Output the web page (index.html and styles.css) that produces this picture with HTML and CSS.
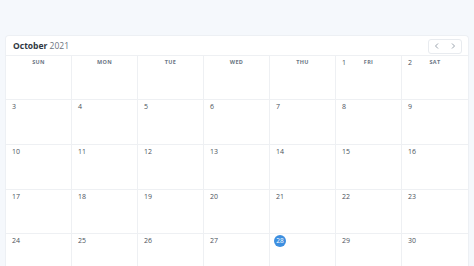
FILE: index.html
```html
<!DOCTYPE html>
<html>
<head>
<meta charset="utf-8">
<link rel="stylesheet" href="styles.css">
</head>
<body>
<div class="card">
  <div class="head">
    <div class="title"><b>October</b> <span>2021</span></div>
    <div class="nav">
      <span class="btn"><svg width="8" height="8" viewBox="0 0 8 8"><path d="M5 1.5L2.5 4L5 6.5" fill="none" stroke="#9aa3ad" stroke-width="1"/></svg></span>
      <span class="btn"><svg width="8" height="8" viewBox="0 0 8 8"><path d="M3 1.5L5.5 4L3 6.5" fill="none" stroke="#9aa3ad" stroke-width="1"/></svg></span>
    </div>
  </div>
  <div class="grid">
    <div class="cell"><span class="dow">SUN</span></div>
    <div class="cell"><span class="dow">MON</span></div>
    <div class="cell"><span class="dow">TUE</span></div>
    <div class="cell"><span class="dow">WED</span></div>
    <div class="cell"><span class="dow">THU</span></div>
    <div class="cell"><span class="num">1</span><span class="dow">FRI</span></div>
    <div class="cell"><span class="num">2</span><span class="dow">SAT</span></div>

    <div class="cell"><span class="num">3</span></div>
    <div class="cell"><span class="num">4</span></div>
    <div class="cell"><span class="num">5</span></div>
    <div class="cell"><span class="num">6</span></div>
    <div class="cell"><span class="num">7</span></div>
    <div class="cell"><span class="num">8</span></div>
    <div class="cell"><span class="num">9</span></div>

    <div class="cell"><span class="num">10</span></div>
    <div class="cell"><span class="num">11</span></div>
    <div class="cell"><span class="num">12</span></div>
    <div class="cell"><span class="num">13</span></div>
    <div class="cell"><span class="num">14</span></div>
    <div class="cell"><span class="num">15</span></div>
    <div class="cell"><span class="num">16</span></div>

    <div class="cell"><span class="num">17</span></div>
    <div class="cell"><span class="num">18</span></div>
    <div class="cell"><span class="num">19</span></div>
    <div class="cell"><span class="num">20</span></div>
    <div class="cell"><span class="num">21</span></div>
    <div class="cell"><span class="num">22</span></div>
    <div class="cell"><span class="num">23</span></div>

    <div class="cell"><span class="num">24</span></div>
    <div class="cell"><span class="num">25</span></div>
    <div class="cell"><span class="num">26</span></div>
    <div class="cell"><span class="num">27</span></div>
    <div class="cell"><span class="num today">28</span></div>
    <div class="cell"><span class="num">29</span></div>
    <div class="cell"><span class="num">30</span></div>
  </div>
</div>
</body>
</html>
```
FILE: styles.css
```css
html, body {
  margin: 0;
  padding: 0;
  background: #f5f8fc;
  font-family: "Open Sans", "Noto Sans", sans-serif;
  overflow: hidden;
}
.card {
  margin: 35px 5px 0 5px;
  width: 464px;
  background: #fff;
  border: 1px solid #edf0f4;
  border-bottom: none;
  border-radius: 4px 4px 0 0;
  box-sizing: border-box;
}
.head {
  height: 19px;
  display: flex;
  align-items: center;
  justify-content: space-between;
  padding: 0 6px 0 7px;
}
.title {
  font-size: 8.5px;
  color: #2f3742;
}
.title b {
  font-weight: 700;
}
.title span {
  color: #6b7480;
}
.nav {
  display: flex;
  border: 1px solid #e8ebef;
  border-radius: 3px;
  height: 13px;
  margin-top: 1px;
}
.btn {
  width: 16px;
  display: flex;
  align-items: center;
  justify-content: center;
}
.grid {
  display: grid;
  grid-template-columns: repeat(7, 1fr);
  grid-template-rows: 44px 45px 45px 44px 45px;
}
.cell {
  border-top: 1px solid #eef0f3;
  border-right: 1px solid #eef0f3;
  position: relative;
  padding: 2px 0 0 6px;
  display: flex;
  align-items: flex-start;
}
.cell:nth-child(7n) {
  border-right: none;
}
.dow {
  position: absolute;
  left: 0;
  right: 0;
  top: 2px;
  text-align: center;
  font-size: 5.5px;
  font-weight: 700;
  letter-spacing: 0.3px;
  color: #6b7684;
  line-height: 8px;
}
.num {
  display: block;
  font-size: 7px;
  color: #4b525b;
  line-height: 10px;
}
.today {
  width: 12px;
  height: 12px;
  line-height: 12px;
  border-radius: 50%;
  background: #3d8fe0;
  color: #fff;
  text-align: center;
  margin-left: -2px;
  margin-top: -1px;
  font-size: 6.5px;
}
```
